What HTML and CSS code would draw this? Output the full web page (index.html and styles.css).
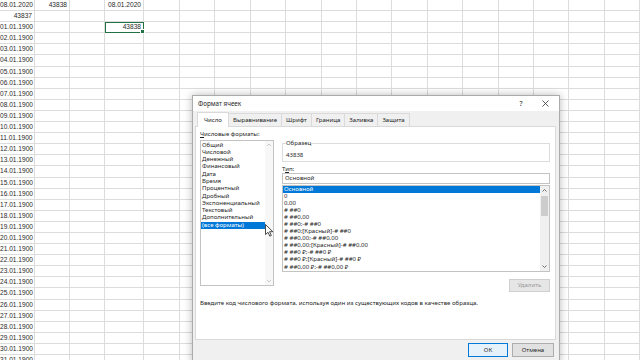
FILE: index.html
```html
<!DOCTYPE html>
<html lang="ru">

<head>
    <meta charset="UTF-8">
    <meta name="viewport" content="width=device-width, initial-scale=1.0">
    <title>Формат ячеек</title>
    <link rel="stylesheet" href="styles.css">
</head>

<body>

    <!-- Лист с данными -->
    <div class="sheet">
        <div class="row"><div class="c">08.01.2020</div><div class="c">43838</div><div class="c"></div><div class="c">08.01.2020</div><div class="c"></div><div class="rest"></div></div>
        <div class="row"><div class="c">43837</div><div class="c"></div><div class="c"></div><div class="c"></div><div class="c"></div><div class="rest"></div></div>
        <div class="row"><div class="c">01.01.1900</div><div class="c"></div><div class="c"></div><div class="c sel">43838</div><div class="c"></div><div class="rest"></div></div>
        <div class="row"><div class="c">02.01.1900</div><div class="c"></div><div class="c"></div><div class="c"></div><div class="c"></div><div class="rest"></div></div>
        <div class="row"><div class="c">03.01.1900</div><div class="c"></div><div class="c"></div><div class="c"></div><div class="c"></div><div class="rest"></div></div>
        <div class="row"><div class="c">04.01.1900</div><div class="c"></div><div class="c"></div><div class="c"></div><div class="c"></div><div class="rest"></div></div>
        <div class="row"><div class="c">05.01.1900</div><div class="c"></div><div class="c"></div><div class="c"></div><div class="c"></div><div class="rest"></div></div>
        <div class="row"><div class="c">06.01.1900</div><div class="c"></div><div class="c"></div><div class="c"></div><div class="c"></div><div class="rest"></div></div>
        <div class="row"><div class="c">07.01.1900</div><div class="c"></div><div class="c"></div><div class="c"></div><div class="c"></div><div class="rest"></div></div>
        <div class="row"><div class="c">08.01.1900</div><div class="c"></div><div class="c"></div><div class="c"></div><div class="c"></div><div class="rest"></div></div>
        <div class="row"><div class="c">09.01.1900</div><div class="c"></div><div class="c"></div><div class="c"></div><div class="c"></div><div class="rest"></div></div>
        <div class="row"><div class="c">10.01.1900</div><div class="c"></div><div class="c"></div><div class="c"></div><div class="c"></div><div class="rest"></div></div>
        <div class="row"><div class="c">11.01.1900</div><div class="c"></div><div class="c"></div><div class="c"></div><div class="c"></div><div class="rest"></div></div>
        <div class="row"><div class="c">12.01.1900</div><div class="c"></div><div class="c"></div><div class="c"></div><div class="c"></div><div class="rest"></div></div>
        <div class="row"><div class="c">13.01.1900</div><div class="c"></div><div class="c"></div><div class="c"></div><div class="c"></div><div class="rest"></div></div>
        <div class="row"><div class="c">14.01.1900</div><div class="c"></div><div class="c"></div><div class="c"></div><div class="c"></div><div class="rest"></div></div>
        <div class="row"><div class="c">15.01.1900</div><div class="c"></div><div class="c"></div><div class="c"></div><div class="c"></div><div class="rest"></div></div>
        <div class="row"><div class="c">16.01.1900</div><div class="c"></div><div class="c"></div><div class="c"></div><div class="c"></div><div class="rest"></div></div>
        <div class="row"><div class="c">17.01.1900</div><div class="c"></div><div class="c"></div><div class="c"></div><div class="c"></div><div class="rest"></div></div>
        <div class="row"><div class="c">18.01.1900</div><div class="c"></div><div class="c"></div><div class="c"></div><div class="c"></div><div class="rest"></div></div>
        <div class="row"><div class="c">19.01.1900</div><div class="c"></div><div class="c"></div><div class="c"></div><div class="c"></div><div class="rest"></div></div>
        <div class="row"><div class="c">20.01.1900</div><div class="c"></div><div class="c"></div><div class="c"></div><div class="c"></div><div class="rest"></div></div>
        <div class="row"><div class="c">21.01.1900</div><div class="c"></div><div class="c"></div><div class="c"></div><div class="c"></div><div class="rest"></div></div>
        <div class="row"><div class="c">22.01.1900</div><div class="c"></div><div class="c"></div><div class="c"></div><div class="c"></div><div class="rest"></div></div>
        <div class="row"><div class="c">23.01.1900</div><div class="c"></div><div class="c"></div><div class="c"></div><div class="c"></div><div class="rest"></div></div>
        <div class="row"><div class="c">24.01.1900</div><div class="c"></div><div class="c"></div><div class="c"></div><div class="c"></div><div class="rest"></div></div>
        <div class="row"><div class="c">25.01.1900</div><div class="c"></div><div class="c"></div><div class="c"></div><div class="c"></div><div class="rest"></div></div>
        <div class="row"><div class="c">26.01.1900</div><div class="c"></div><div class="c"></div><div class="c"></div><div class="c"></div><div class="rest"></div></div>
        <div class="row"><div class="c">27.01.1900</div><div class="c"></div><div class="c"></div><div class="c"></div><div class="c"></div><div class="rest"></div></div>
        <div class="row"><div class="c">28.01.1900</div><div class="c"></div><div class="c"></div><div class="c"></div><div class="c"></div><div class="rest"></div></div>
        <div class="row"><div class="c">29.01.1900</div><div class="c"></div><div class="c"></div><div class="c"></div><div class="c"></div><div class="rest"></div></div>
        <div class="row"><div class="c">30.01.1900</div><div class="c"></div><div class="c"></div><div class="c"></div><div class="c"></div><div class="rest"></div></div>
        <div class="row"><div class="c">31.01.1900</div><div class="c"></div><div class="c"></div><div class="c"></div><div class="c"></div><div class="rest"></div></div>
    </div>

    <!-- Диалог "Формат ячеек" -->
    <div class="dialog">
        <div class="dlg-title">
            <span class="dlg-name">Формат ячеек</span>
            <span class="dlg-help">?</span>
            <span class="dlg-close">
                <svg width="7" height="7" viewBox="0 0 7 7"><path d="M0.5 0.5 L6.5 6.5 M6.5 0.5 L0.5 6.5" stroke="#333" stroke-width="0.8" fill="none"/></svg>
            </span>
        </div>
        <div class="dlg-body">
            <div class="tabs">
                <div class="tab active">Число</div>
                <div class="tab">Выравнивание</div>
                <div class="tab">Шрифт</div>
                <div class="tab">Граница</div>
                <div class="tab">Заливка</div>
                <div class="tab">Защита</div>
            </div>
            <div class="panel">
                <div class="panel-top">
                    <div class="formats">
                        <div class="lbl"><u>Ч</u>исловые форматы:</div>
                        <div class="listbox cats">
                            <div class="items">
                                <div class="item">Общий</div>
                                <div class="item">Числовой</div>
                                <div class="item">Денежный</div>
                                <div class="item">Финансовый</div>
                                <div class="item">Дата</div>
                                <div class="item">Время</div>
                                <div class="item">Процентный</div>
                                <div class="item">Дробный</div>
                                <div class="item">Экспоненциальный</div>
                                <div class="item">Текстовый</div>
                                <div class="item">Дополнительный</div>
                                <div class="item sel">(все форматы)</div>
                            </div>
                            <div class="scroll off">
                                <svg class="arrow" width="8" height="8" viewBox="0 0 8 8"><path d="M2 5 L4 3 L6 5" stroke="#c4c4c4" stroke-width="0.9" fill="none"/></svg>
                                <div class="track"></div>
                                <svg class="arrow" width="8" height="8" viewBox="0 0 8 8"><path d="M2 3 L4 5 L6 3" stroke="#c4c4c4" stroke-width="0.9" fill="none"/></svg>
                            </div>
                        </div>
                    </div>
                    <div class="details">
                        <fieldset class="sample">
                            <legend>Образец</legend>
                            <div>43838</div>
                        </fieldset>
                        <div class="lbl type-lbl">Т<u>и</u>п:</div>
                        <div class="type-input">Основной</div>
                        <div class="listbox codes">
                            <div class="items">
                                <div class="item sel">Основной</div>
                                <div class="item">0</div>
                                <div class="item">0,00</div>
                                <div class="item"># ##0</div>
                                <div class="item"># ##0,00</div>
                                <div class="item"># ##0;-# ##0</div>
                                <div class="item"># ##0;[Красный]-# ##0</div>
                                <div class="item"># ##0,00;-# ##0,00</div>
                                <div class="item"># ##0,00;[Красный]-# ##0,00</div>
                                <div class="item"># ##0 ₽;-# ##0 ₽</div>
                                <div class="item"># ##0 ₽;[Красный]-# ##0 ₽</div>
                                <div class="item"># ##0,00 ₽;-# ##0,00 ₽</div>
                            </div>
                            <div class="scroll">
                                <svg class="arrow" width="9" height="9" viewBox="0 0 9 9"><path d="M2.5 5.5 L4.5 3.5 L6.5 5.5" stroke="#606060" stroke-width="0.9" fill="none"/></svg>
                                <div class="track"><div class="thumb"></div></div>
                                <svg class="arrow" width="9" height="9" viewBox="0 0 9 9"><path d="M2.5 3.5 L4.5 5.5 L6.5 3.5" stroke="#606060" stroke-width="0.9" fill="none"/></svg>
                            </div>
                        </div>
                        <div class="del-row">
                            <button class="btn disabled">Удалить</button>
                        </div>
                    </div>
                </div>
                <p class="hint">Введите код числового формата, используя один из существующих кодов в качестве образца.</p>
            </div>
            <div class="actions">
                <button class="btn ok">ОК</button>
                <button class="btn cancel">Отмена</button>
            </div>
        </div>
    </div>

    <!-- Указатель мыши -->
    <svg class="cursor" width="9" height="13" viewBox="0 0 9 13">
        <path d="M0.5 0.5 L0.5 10.5 L3 8.3 L4.8 12.2 L6.3 11.5 L4.6 7.7 L7.8 7.7 Z" fill="#fff" stroke="#000" stroke-width="0.7"/>
    </svg>

</body>

</html>
```

FILE: styles.css
```css
/* Общие стили */
body {
    margin: 0;
    width: 640px;
    height: 360px;
    overflow: hidden;
    position: relative;
    background: #fff;
    font-family: "Liberation Sans", Arial, sans-serif;
    color: #2a2a2a;
}

/* Лист */
.sheet {
    display: flex;
    flex-direction: column;
}

.row {
    display: grid;
    grid-template-columns: 35px 35px 35px 39px 36px 1fr;
    height: 11.1px;
    flex: none;
}

.c {
    box-sizing: border-box;
    border-right: 1px solid #dcdcdc;
    border-bottom: 1px solid #dcdcdc;
    font-size: 6.6px;
    line-height: 10.1px;
    text-align: right;
    padding-right: 2px;
    white-space: nowrap;
}

.c.sel {
    position: relative;
    outline: 1.5px solid #217346;
    outline-offset: -1px;
}

.c.sel::after {
    content: "";
    position: absolute;
    right: -2px;
    bottom: -2px;
    width: 3px;
    height: 3px;
    background: #217346;
    border: 1px solid #fff;
}

.rest {
    box-sizing: border-box;
    border-bottom: 1px solid #dcdcdc;
    background: repeating-linear-gradient(to right, transparent 0 34.4px, #dcdcdc 34.4px 35.4px);
}

/* Диалог */
.dialog {
    position: absolute;
    left: 192px;
    top: 95px;
    width: 368px;
    box-sizing: border-box;
    background: #f0f0f0;
    border: 1px solid #ababab;
    box-shadow: 0 0 8px rgba(0, 0, 0, 0.28);
    font-family: "Noto Sans", "Segoe UI", sans-serif;
    font-size: 6.05px;
    color: #1e1e1e;
    display: flex;
    flex-direction: column;
}

.dlg-title {
    height: 15px;
    background: #fff;
    display: flex;
    align-items: center;
    padding-left: 5px;
}

.dlg-name {
    flex: 1;
    font-size: 6.3px;
}

.dlg-help {
    width: 20px;
    text-align: center;
    font-size: 7px;
}

.dlg-close {
    width: 28px;
    display: flex;
    justify-content: center;
}

.dlg-body {
    padding: 0 3px 6px 2px;
}

/* Вкладки */
.tabs {
    display: flex;
    height: 15px;
    padding-left: 2px;
    align-items: flex-end;
}

.tab {
    box-sizing: border-box;
    height: 13px;
    line-height: 12px;
    padding: 0 4px;
    border: 1px solid #dadada;
    border-bottom: none;
    margin-left: -1px;
    background: #f0f0f0;
}

.tab.active {
    height: 15px;
    line-height: 14px;
    padding: 0 6px;
    margin-left: 0;
    margin-bottom: -1px;
    background: #fff;
    position: relative;
}

/* Панель */
.panel {
    box-sizing: border-box;
    height: 214px;
    background: #fff;
    border: 1px solid #d9d9d9;
}

.panel-top {
    display: flex;
    gap: 8px;
    padding: 3px 5px 0 4px;
}

.lbl {
    line-height: 8px;
    margin-bottom: 2px;
}

.formats {
    width: 74px;
}

.details {
    flex: 1;
    display: flex;
    flex-direction: column;
}

.listbox {
    box-sizing: border-box;
    display: flex;
    border: 1px solid #c3c3c3;
    background: #fff;
}

.cats {
    height: 146px;
}

.codes {
    height: 87px;
}

.items {
    flex: 1;
    min-width: 0;
    display: flex;
    flex-direction: column;
    padding-top: 0.5px;
}

.item {
    height: 7.3px;
    line-height: 7.3px;
    padding-left: 1px;
    white-space: nowrap;
    overflow: hidden;
}

.item.sel {
    background: #0078d7;
    color: #fff;
}

.scroll {
    width: 9px;
    display: flex;
    flex-direction: column;
    background: #f0f0f0;
}

.scroll.off {
    width: 8px;
    background: #f7f7f7;
}

.scroll .track {
    flex: 1;
    padding-top: 1px;
}

.thumb {
    height: 20px;
    margin: 0 1px;
    background: #cdcdcd;
}

/* Образец */
.sample {
    margin: 9px 0 0;
    padding: 4px 3px 2px;
    border: 1px solid #dcdcdc;
    min-inline-size: 0;
}

.sample legend {
    padding: 0;
    line-height: 8px;
}

.sample div {
    line-height: 8px;
}

.type-lbl {
    margin-top: 3px;
    margin-bottom: 0;
}

.type-input {
    box-sizing: border-box;
    height: 11px;
    line-height: 9px;
    padding-left: 2px;
    border: 1px solid #c3c3c3;
    margin-bottom: 0.5px;
}

.del-row {
    display: flex;
    justify-content: flex-end;
    margin-top: 7px;
}

/* Кнопки */
.btn {
    box-sizing: border-box;
    font-family: inherit;
    font-size: 6.05px;
    color: #1e1e1e;
    height: 13px;
    padding: 0;
    border: 1px solid #adadad;
    background: #e1e1e1;
}

.btn.disabled {
    width: 41px;
    color: #9a9a9a;
    border-color: #cfcfcf;
    background: #e6e6e6;
}

.hint {
    margin: 7px 0 0 4px;
    line-height: 8px;
}

.actions {
    display: flex;
    justify-content: flex-end;
    gap: 4px;
    padding: 3px 2px 0 0;
}

.btn.ok {
    width: 40px;
    height: 14px;
    border-color: #0078d7;
    background: #e5f1fb;
}

.btn.cancel {
    width: 42px;
    height: 14px;
}

.cursor {
    position: absolute;
    left: 265px;
    top: 224px;
}
```
